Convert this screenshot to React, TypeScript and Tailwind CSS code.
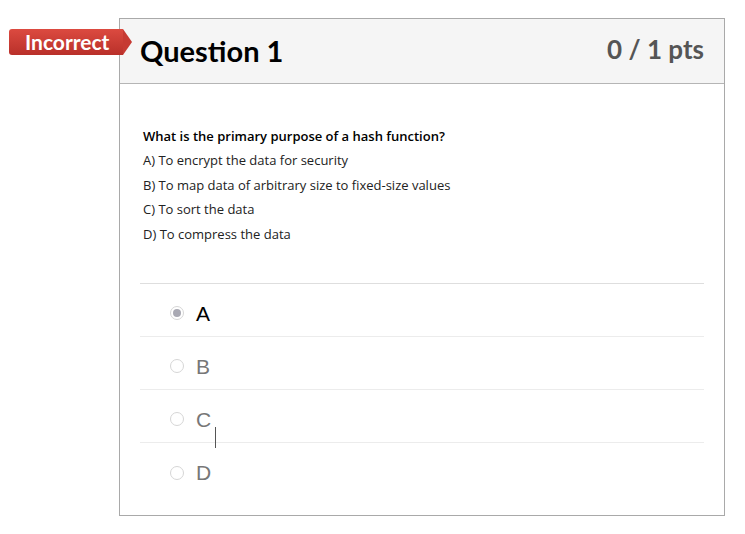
const options = ["A", "B", "C", "D"];

const Radio = ({ checked }: { checked: boolean }) => (
    <span className="flex h-[14px] w-[14px] items-center justify-center rounded-full border border-[#d6d6d6] bg-white">
        {checked && <span className="h-[8px] w-[8px] rounded-full bg-[#a9a9b3]" />}
    </span>
);

const App = () => {
    return (
        <div className="relative h-[534px] w-[745px] bg-white pt-[18px] pl-[119px]">
            <div className="absolute left-[9px] top-[29px] flex h-[26px] items-center">
                <div className="flex h-[26px] items-center rounded-l-[3px] bg-gradient-to-b from-[#dc4a40] to-[#b9302a] pb-[2px] pl-[16px] pr-[14px] text-[21px] font-bold leading-none text-white [font-family:Lato,sans-serif]">
                    Incorrect
                </div>
                <div className="h-0 w-0 border-y-[13px] border-l-[9px] border-y-transparent border-l-[#c63a33]" />
            </div>

            <section className="flex h-[498px] w-[606px] flex-col border border-[#a9a9a9]">
                <div className="flex h-[65px] items-start justify-between border-b border-[#b5b5b5] bg-[#f5f5f5] px-[20px] pt-[15px] [font-family:Lato,sans-serif]">
                    <h2 className="text-[29px] font-bold leading-[34px] text-black">Question 1</h2>
                    <div className="text-[26px] font-bold leading-[30px] text-[#555]">0 / 1 pts</div>
                </div>

                <div className="px-[20px] pt-[40px]">
                    <div className="pl-[3px] text-[13px] leading-[24.4px] text-[#222] [font-family:'Open_Sans',sans-serif]">
                        <p className="font-semibold text-black">What is the primary purpose of a hash function?</p>
                        <p>A) To encrypt the data for security</p>
                        <p>B) To map data of arbitrary size to fixed-size values</p>
                        <p>C) To sort the data</p>
                        <p>D) To compress the data</p>
                    </div>

                    <div className="mt-[37px] border-t border-[#dedede]">
                        {options.map((o, i) => (
                            <div
                                key={o}
                                className={`relative flex h-[53px] items-center gap-[12px] pl-[30px] pt-[6px] ${i < options.length - 1 ? "border-b border-[#ececec]" : ""}`}
                            >
                                <Radio checked={i === 0} />
                                <span className={`text-[21px] leading-none [font-family:'Liberation_Sans',Arial,sans-serif] ${i === 0 ? "text-black" : "text-[#777]"}`}>
                                    {o}
                                </span>
                                {o === "C" && <span className="absolute left-[75px] top-[37px] h-[21px] w-px bg-[#555]" />}
                            </div>
                        ))}
                    </div>
                </div>
            </section>
        </div>
    );
};

export default App;
